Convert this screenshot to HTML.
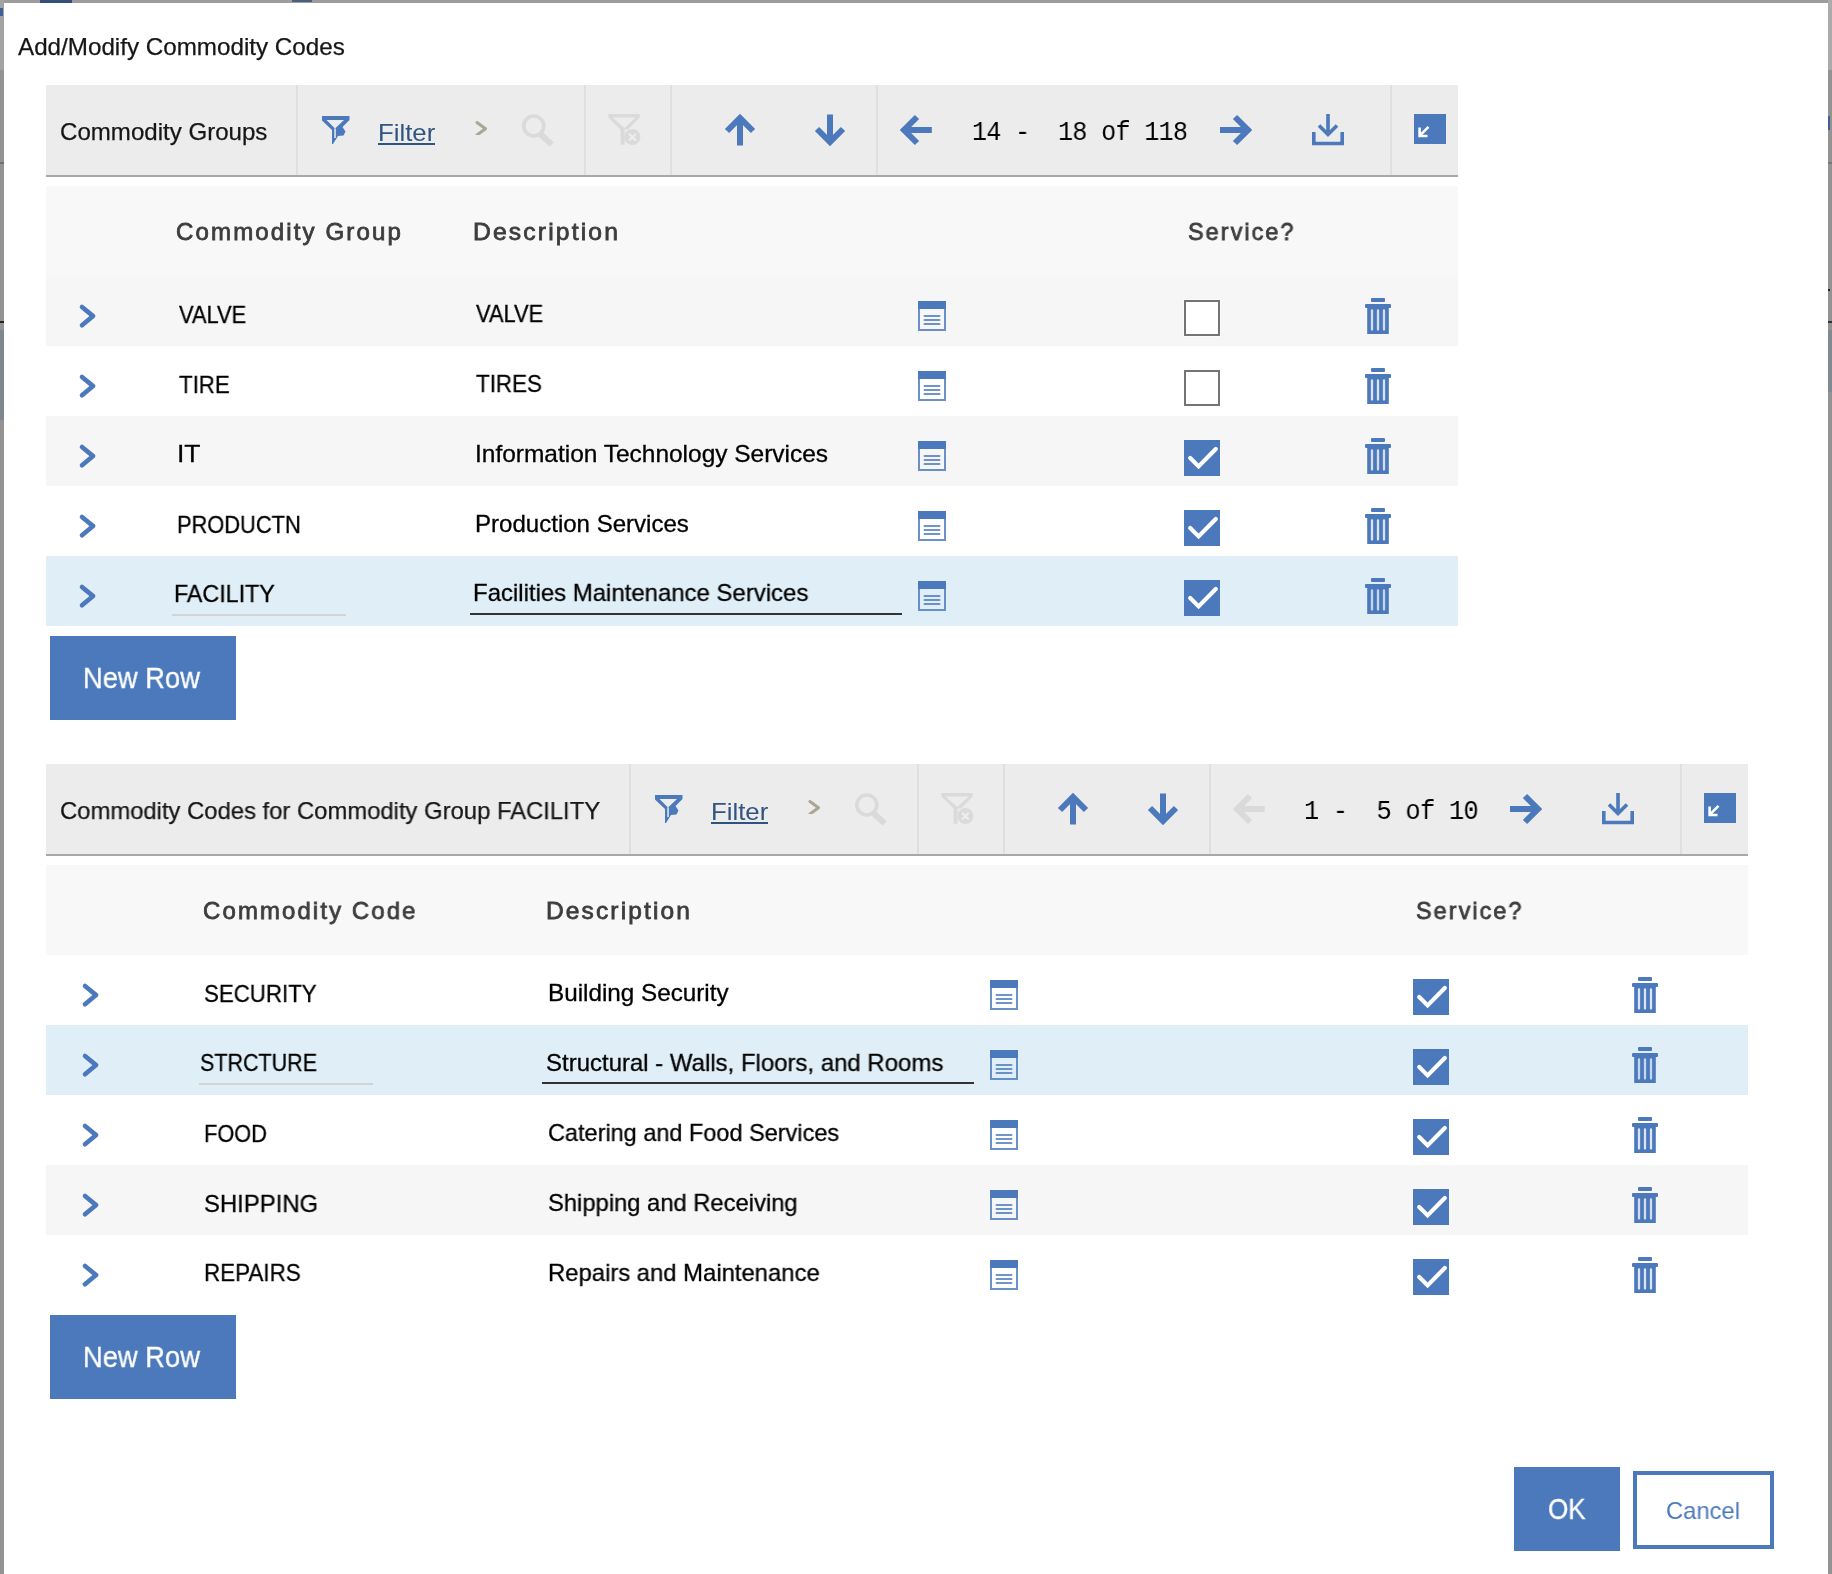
<!DOCTYPE html>
<html><head><meta charset="utf-8"><title>Add/Modify Commodity Codes</title>
<style>
html,body{margin:0;padding:0;}
body{width:1832px;height:1574px;position:relative;overflow:hidden;background:#9c9c9c;font-family:"Liberation Sans", sans-serif;}
svg{display:block;}
div[id]{will-change:transform;}
</style></head><body>
<div style="position:absolute;left:0px;top:0px;width:1832px;height:1574px;background:#939393;"></div>
<div style="position:absolute;left:0px;top:0px;width:1832px;height:3px;background:#9d9d9d;"></div>
<div style="position:absolute;left:0px;top:0px;width:4px;height:70px;background:#a3a3a3;"></div>
<div style="position:absolute;left:1828px;top:0px;width:4px;height:70px;background:#ababab;"></div>
<div style="position:absolute;left:0px;top:330px;width:4px;height:90px;background:#7e8690;"></div>
<div style="position:absolute;left:1828px;top:330px;width:4px;height:62px;background:#808a92;"></div>
<div style="position:absolute;left:0px;top:162px;width:4px;height:2px;background:#707070;"></div>
<div style="position:absolute;left:0px;top:321px;width:4px;height:2px;background:#222222;"></div>
<div style="position:absolute;left:1828px;top:162px;width:4px;height:2px;background:#777777;"></div>
<div style="position:absolute;left:1828px;top:321px;width:4px;height:2px;background:#333333;"></div>
<div style="position:absolute;left:1828px;top:289px;width:2px;height:2px;background:#222222;"></div>
<div style="position:absolute;left:1828px;top:116px;width:2px;height:14px;background:#3f5f95;"></div>
<div style="position:absolute;left:0px;top:8px;width:3px;height:8px;background:#3f6296;"></div>
<div style="position:absolute;left:40px;top:0px;width:32px;height:3px;background:#34507a;"></div>
<div style="position:absolute;left:292px;top:0px;width:20px;height:2px;background:#4a5f80;"></div>
<div style="position:absolute;left:4px;top:3px;width:1824px;height:1571px;background:#ffffff;"></div>
<div id="title" style="position:absolute;left:18.19px;top:35.21px;font-family:'Liberation Sans', sans-serif;font-size:24px;line-height:24px;font-weight:400;color:#161616;white-space:pre;transform-origin:0 0;transform:scaleX(1.0081);-webkit-text-stroke:0.25px #161616;">Add/Modify Commodity Codes</div>
<div style="position:absolute;left:46px;top:85px;width:1412px;height:90px;background:#ececec;"></div>
<div style="position:absolute;left:46px;top:175px;width:1412px;height:2px;background:#a8a8a8;"></div>
<div style="position:absolute;left:296px;top:85px;width:2px;height:90px;background:#dfdfdf;"></div>
<div style="position:absolute;left:584px;top:85px;width:2px;height:90px;background:#dfdfdf;"></div>
<div style="position:absolute;left:670px;top:85px;width:2px;height:90px;background:#dfdfdf;"></div>
<div style="position:absolute;left:876px;top:85px;width:2px;height:90px;background:#dfdfdf;"></div>
<div style="position:absolute;left:1390px;top:85px;width:2px;height:90px;background:#dfdfdf;"></div>
<div id="t1title" style="position:absolute;left:60.00px;top:119.82px;font-family:'Liberation Sans', sans-serif;font-size:24px;line-height:24px;font-weight:400;color:#161616;white-space:pre;transform-origin:0 0;transform:scaleX(1.0030);-webkit-text-stroke:0.25px #161616;">Commodity Groups</div>
<svg style="position:absolute;left:316px;top:110px" width="40" height="40" viewBox="0 0 40 40"><path fill="#4b79bc" fill-rule="evenodd" d="M6,6 H33.5 V10 L26.5,17 L29.5,21.5 L27.5,25.5 L22,26 L17,34 L16,34 V20 L6,10.5 Z M10.5,10 H28 L19,18.5 Z M18.3,18.5 H19.8 V28 H18.3 Z"/></svg>
<div id="t1filter" style="position:absolute;left:378.10px;top:121.32px;font-family:'Liberation Sans', sans-serif;font-size:24px;line-height:24px;font-weight:400;color:#30547f;white-space:pre;transform-origin:0 0;transform:scaleX(1.0744);">Filter</div>
<div style="position:absolute;left:378px;top:142.9px;width:56.5px;height:1.6999999999999886px;background:#30547f;"></div>
<svg style="position:absolute;left:470px;top:115px" width="20" height="20" viewBox="0 0 20 20"><path d="M7,7.5 L15.5,13.7 L7,20" fill="none" stroke="#aaa595" stroke-width="3" stroke-linecap="round" stroke-linejoin="round"/></svg>
<svg style="position:absolute;left:518px;top:107px" width="40" height="40" viewBox="0 0 40 40"><circle cx="15.8" cy="19" r="10" fill="none" stroke="#dadada" stroke-width="3.6"/><path d="M25,29.5 L31.5,35.5" stroke="#dadada" stroke-width="6" stroke-linecap="square"/></svg>
<svg style="position:absolute;left:604px;top:110px" width="40" height="40" viewBox="0 0 40 40"><path fill="#dadada" fill-rule="evenodd" d="M4.3,4 H35.7 V7.6 L24,19.5 L20.4,19.5 L16.6,19.5 L4.3,7.6 Z M8.5,7.6 H31.5 L20.4,18 Z"/><rect x="16.6" y="19" width="4" height="15.7" fill="#dadada"/><circle cx="28.4" cy="27.1" r="8" fill="#dadada"/><path d="M25,23.7 L31.8,30.5 M31.8,23.7 L25,30.5" stroke="#eeeeee" stroke-width="2"/></svg>
<svg style="position:absolute;left:724px;top:114px" width="32" height="32" viewBox="0 0 32 32"><path d="M16,31.6 V4 M3,17 L16,4 L29,17" fill="none" stroke="#4b79bc" stroke-width="6"/></svg>
<svg style="position:absolute;left:814px;top:114px" width="32" height="32" viewBox="0 0 32 32"><path d="M16,0.4 V28 M3,15 L16,28 L29,15" fill="none" stroke="#4b79bc" stroke-width="6"/></svg>
<svg style="position:absolute;left:900.0px;top:114px" width="32" height="32" viewBox="0 0 32 32"><path d="M31.8,16 H4 M17,3 L4,16 L17,29" fill="none" stroke="#4b79bc" stroke-width="6"/></svg>
<div id="t1pg" style="position:absolute;left:971.72px;top:119.81px;font-family:'Liberation Mono', monospace;font-size:27px;line-height:27px;font-weight:400;color:#000;white-space:pre;transform-origin:0 0;transform:scaleX(0.9230);letter-spacing:-0.65px;">14 -  18 of 118</div>
<svg style="position:absolute;left:1220px;top:114px" width="32" height="32" viewBox="0 0 32 32"><path d="M0,16 H28 M15,3 L28,16 L15,29" fill="none" stroke="#4b79bc" stroke-width="6"/></svg>
<svg style="position:absolute;left:1312px;top:114px" width="32" height="32" viewBox="0 0 32 32"><path d="M16,0 V21 M7,11.5 L16,20.5 L25,11.5" fill="none" stroke="#4b79bc" stroke-width="3.6"/><path d="M1.8,18 V29.5 H30.2 V18" fill="none" stroke="#4b79bc" stroke-width="3.6"/></svg>
<svg style="position:absolute;left:1414px;top:114px" width="32" height="30" viewBox="0 0 32 30"><rect x="0" y="0" width="32" height="30" fill="#4b79bc"/><path d="M14.5,12.8 L6.5,20.8 M5.6,13.5 V22 H13.5" fill="none" stroke="#fff" stroke-width="2.6"/></svg>
<div style="position:absolute;left:46px;top:186px;width:1412px;height:90px;background:#f8f8f8;"></div>
<div id="h1a" style="position:absolute;left:176.00px;top:219.51px;font-family:'Liberation Sans', sans-serif;font-size:24px;line-height:24px;font-weight:400;color:#3d3d3d;white-space:pre;transform-origin:0 0;transform:scaleX(1.0030);-webkit-text-stroke:0.8px #3d3d3d;letter-spacing:2.1px;">Commodity Group</div>
<div id="h1b" style="position:absolute;left:472.95px;top:219.51px;font-family:'Liberation Sans', sans-serif;font-size:24px;line-height:24px;font-weight:400;color:#3d3d3d;white-space:pre;transform-origin:0 0;transform:scaleX(1.0274);-webkit-text-stroke:0.8px #3d3d3d;letter-spacing:2.1px;">Description</div>
<div id="h1c" style="position:absolute;left:1187.86px;top:219.51px;font-family:'Liberation Sans', sans-serif;font-size:24px;line-height:24px;font-weight:400;color:#3d3d3d;white-space:pre;transform-origin:0 0;transform:scaleX(0.9752);-webkit-text-stroke:0.8px #3d3d3d;letter-spacing:2.1px;">Service?</div>
<div style="position:absolute;left:46px;top:276px;width:1412px;height:70px;background:#f6f6f6;"></div>
<svg style="position:absolute;left:77.1px;top:301.8px" width="24" height="30" viewBox="0 0 24 30"><path d="M5,5 L16.1,14.1 L5,23.3" fill="none" stroke="#4b79bc" stroke-width="4.6" stroke-linecap="round" stroke-linejoin="round"/></svg>
<div id="t1r0g" style="position:absolute;left:179.33px;top:302.82px;font-family:'Liberation Sans', sans-serif;font-size:24px;line-height:24px;font-weight:400;color:#000;white-space:pre;transform-origin:0 0;transform:scaleX(0.9105);-webkit-text-stroke:0.3px #000;">VALVE</div>
<div id="t1r0d" style="position:absolute;left:475.67px;top:301.51px;font-family:'Liberation Sans', sans-serif;font-size:24px;line-height:24px;font-weight:400;color:#000;white-space:pre;transform-origin:0 0;transform:scaleX(0.9105);-webkit-text-stroke:0.3px #000;">VALVE</div>
<svg style="position:absolute;left:918px;top:301px" width="28" height="30" viewBox="0 0 28 30"><rect x="1" y="1" width="26" height="28" fill="none" stroke="#4b79bc" stroke-opacity="0.82" stroke-width="2"/><rect x="0" y="0" width="28" height="8" fill="#4b79bc"/><path d="M6.5,15 H21.5 M6.5,19 H21.5 M6.5,23 H21.5" stroke="#4b79bc" stroke-opacity="0.8" stroke-width="2" stroke-linecap="round"/></svg>
<svg style="position:absolute;left:1183px;top:299px" width="38" height="38" viewBox="0 0 38 38"><rect x="0.5" y="0.5" width="37" height="37" fill="#fff"/><rect x="2" y="2" width="34" height="34" fill="#fff" stroke="#747474" stroke-width="2"/></svg>
<svg style="position:absolute;left:1365px;top:298px" width="26" height="36" viewBox="0 0 26 36"><rect x="6" y="0" width="14" height="4" rx="1" fill="#4b79bc"/><rect x="0" y="6" width="26" height="4" rx="1" fill="#4b79bc"/><rect x="2.2" y="9" width="21.6" height="27" fill="#4b79bc"/><path d="M7,12.5 V31.5 M13,12.5 V31.5 M19,12.5 V31.5" stroke="#f6f6f6" stroke-opacity="0.8" stroke-width="2.3" stroke-linecap="round"/></svg>
<svg style="position:absolute;left:77.1px;top:371.8px" width="24" height="30" viewBox="0 0 24 30"><path d="M5,5 L16.1,14.1 L5,23.3" fill="none" stroke="#4b79bc" stroke-width="4.6" stroke-linecap="round" stroke-linejoin="round"/></svg>
<div id="t1r1g" style="position:absolute;left:179.31px;top:373.01px;font-family:'Liberation Sans', sans-serif;font-size:24px;line-height:24px;font-weight:400;color:#000;white-space:pre;transform-origin:0 0;transform:scaleX(0.9276);-webkit-text-stroke:0.3px #000;">TIRE</div>
<div id="t1r1d" style="position:absolute;left:475.71px;top:371.82px;font-family:'Liberation Sans', sans-serif;font-size:24px;line-height:24px;font-weight:400;color:#000;white-space:pre;transform-origin:0 0;transform:scaleX(0.9320);-webkit-text-stroke:0.3px #000;">TIRES</div>
<svg style="position:absolute;left:918px;top:371px" width="28" height="30" viewBox="0 0 28 30"><rect x="1" y="1" width="26" height="28" fill="none" stroke="#4b79bc" stroke-opacity="0.82" stroke-width="2"/><rect x="0" y="0" width="28" height="8" fill="#4b79bc"/><path d="M6.5,15 H21.5 M6.5,19 H21.5 M6.5,23 H21.5" stroke="#4b79bc" stroke-opacity="0.8" stroke-width="2" stroke-linecap="round"/></svg>
<svg style="position:absolute;left:1183px;top:369px" width="38" height="38" viewBox="0 0 38 38"><rect x="0.5" y="0.5" width="37" height="37" fill="#fff"/><rect x="2" y="2" width="34" height="34" fill="#fff" stroke="#747474" stroke-width="2"/></svg>
<svg style="position:absolute;left:1365px;top:368px" width="26" height="36" viewBox="0 0 26 36"><rect x="6" y="0" width="14" height="4" rx="1" fill="#4b79bc"/><rect x="0" y="6" width="26" height="4" rx="1" fill="#4b79bc"/><rect x="2.2" y="9" width="21.6" height="27" fill="#4b79bc"/><path d="M7,12.5 V31.5 M13,12.5 V31.5 M19,12.5 V31.5" stroke="#ffffff" stroke-opacity="0.8" stroke-width="2.3" stroke-linecap="round"/></svg>
<div style="position:absolute;left:46px;top:416px;width:1412px;height:70px;background:#f6f6f6;"></div>
<svg style="position:absolute;left:77.1px;top:441.8px" width="24" height="30" viewBox="0 0 24 30"><path d="M5,5 L16.1,14.1 L5,23.3" fill="none" stroke="#4b79bc" stroke-width="4.6" stroke-linecap="round" stroke-linejoin="round"/></svg>
<div id="t1r2g" style="position:absolute;left:177.08px;top:442.32px;font-family:'Liberation Sans', sans-serif;font-size:24px;line-height:24px;font-weight:400;color:#000;white-space:pre;transform-origin:0 0;transform:scaleX(1.1053);-webkit-text-stroke:0.3px #000;">IT</div>
<div id="t1r2d" style="position:absolute;left:475.17px;top:441.82px;font-family:'Liberation Sans', sans-serif;font-size:24px;line-height:24px;font-weight:400;color:#000;white-space:pre;transform-origin:0 0;transform:scaleX(1.0192);-webkit-text-stroke:0.3px #000;">Information Technology Services</div>
<svg style="position:absolute;left:918px;top:441px" width="28" height="30" viewBox="0 0 28 30"><rect x="1" y="1" width="26" height="28" fill="none" stroke="#4b79bc" stroke-opacity="0.82" stroke-width="2"/><rect x="0" y="0" width="28" height="8" fill="#4b79bc"/><path d="M6.5,15 H21.5 M6.5,19 H21.5 M6.5,23 H21.5" stroke="#4b79bc" stroke-opacity="0.8" stroke-width="2" stroke-linecap="round"/></svg>
<svg style="position:absolute;left:1184px;top:440px" width="36" height="36" viewBox="0 0 36 36"><rect x="0" y="0" width="36" height="36" fill="#4b79bc"/><path d="M6.2,18.1 L14.6,26.4 L31.8,9" fill="none" stroke="#fff" stroke-width="4.2" stroke-linecap="round"/></svg>
<svg style="position:absolute;left:1365px;top:438px" width="26" height="36" viewBox="0 0 26 36"><rect x="6" y="0" width="14" height="4" rx="1" fill="#4b79bc"/><rect x="0" y="6" width="26" height="4" rx="1" fill="#4b79bc"/><rect x="2.2" y="9" width="21.6" height="27" fill="#4b79bc"/><path d="M7,12.5 V31.5 M13,12.5 V31.5 M19,12.5 V31.5" stroke="#f6f6f6" stroke-opacity="0.8" stroke-width="2.3" stroke-linecap="round"/></svg>
<svg style="position:absolute;left:77.1px;top:511.79999999999995px" width="24" height="30" viewBox="0 0 24 30"><path d="M5,5 L16.1,14.1 L5,23.3" fill="none" stroke="#4b79bc" stroke-width="4.6" stroke-linecap="round" stroke-linejoin="round"/></svg>
<div id="t1r3g" style="position:absolute;left:177.49px;top:512.51px;font-family:'Liberation Sans', sans-serif;font-size:24px;line-height:24px;font-weight:400;color:#000;white-space:pre;transform-origin:0 0;transform:scaleX(0.9093);-webkit-text-stroke:0.3px #000;">PRODUCTN</div>
<div id="t1r3d" style="position:absolute;left:475.19px;top:512.01px;font-family:'Liberation Sans', sans-serif;font-size:24px;line-height:24px;font-weight:400;color:#000;white-space:pre;transform-origin:0 0;transform:scaleX(1.0020);-webkit-text-stroke:0.3px #000;">Production Services</div>
<svg style="position:absolute;left:918px;top:511px" width="28" height="30" viewBox="0 0 28 30"><rect x="1" y="1" width="26" height="28" fill="none" stroke="#4b79bc" stroke-opacity="0.82" stroke-width="2"/><rect x="0" y="0" width="28" height="8" fill="#4b79bc"/><path d="M6.5,15 H21.5 M6.5,19 H21.5 M6.5,23 H21.5" stroke="#4b79bc" stroke-opacity="0.8" stroke-width="2" stroke-linecap="round"/></svg>
<svg style="position:absolute;left:1184px;top:510px" width="36" height="36" viewBox="0 0 36 36"><rect x="0" y="0" width="36" height="36" fill="#4b79bc"/><path d="M6.2,18.1 L14.6,26.4 L31.8,9" fill="none" stroke="#fff" stroke-width="4.2" stroke-linecap="round"/></svg>
<svg style="position:absolute;left:1365px;top:508px" width="26" height="36" viewBox="0 0 26 36"><rect x="6" y="0" width="14" height="4" rx="1" fill="#4b79bc"/><rect x="0" y="6" width="26" height="4" rx="1" fill="#4b79bc"/><rect x="2.2" y="9" width="21.6" height="27" fill="#4b79bc"/><path d="M7,12.5 V31.5 M13,12.5 V31.5 M19,12.5 V31.5" stroke="#ffffff" stroke-opacity="0.8" stroke-width="2.3" stroke-linecap="round"/></svg>
<div style="position:absolute;left:46px;top:556px;width:1412px;height:70px;background:#e0eff7;"></div>
<svg style="position:absolute;left:77.1px;top:581.8px" width="24" height="30" viewBox="0 0 24 30"><path d="M5,5 L16.1,14.1 L5,23.3" fill="none" stroke="#4b79bc" stroke-width="4.6" stroke-linecap="round" stroke-linejoin="round"/></svg>
<div id="t1r4g" style="position:absolute;left:173.96px;top:581.91px;font-family:'Liberation Sans', sans-serif;font-size:24px;line-height:24px;font-weight:400;color:#000;white-space:pre;transform-origin:0 0;transform:scaleX(0.9688);-webkit-text-stroke:0.3px #000;">FACILITY</div>
<div id="t1r4d" style="position:absolute;left:473.30px;top:581.01px;font-family:'Liberation Sans', sans-serif;font-size:24px;line-height:24px;font-weight:400;color:#000;white-space:pre;transform-origin:0 0;transform:scaleX(0.9976);-webkit-text-stroke:0.3px #000;">Facilities Maintenance Services</div>
<svg style="position:absolute;left:918px;top:581px" width="28" height="30" viewBox="0 0 28 30"><rect x="1" y="1" width="26" height="28" fill="none" stroke="#4b79bc" stroke-opacity="0.82" stroke-width="2"/><rect x="0" y="0" width="28" height="8" fill="#4b79bc"/><path d="M6.5,15 H21.5 M6.5,19 H21.5 M6.5,23 H21.5" stroke="#4b79bc" stroke-opacity="0.8" stroke-width="2" stroke-linecap="round"/></svg>
<svg style="position:absolute;left:1184px;top:580px" width="36" height="36" viewBox="0 0 36 36"><rect x="0" y="0" width="36" height="36" fill="#4b79bc"/><path d="M6.2,18.1 L14.6,26.4 L31.8,9" fill="none" stroke="#fff" stroke-width="4.2" stroke-linecap="round"/></svg>
<svg style="position:absolute;left:1365px;top:578px" width="26" height="36" viewBox="0 0 26 36"><rect x="6" y="0" width="14" height="4" rx="1" fill="#4b79bc"/><rect x="0" y="6" width="26" height="4" rx="1" fill="#4b79bc"/><rect x="2.2" y="9" width="21.6" height="27" fill="#4b79bc"/><path d="M7,12.5 V31.5 M13,12.5 V31.5 M19,12.5 V31.5" stroke="#e0eff7" stroke-opacity="0.8" stroke-width="2.3" stroke-linecap="round"/></svg>
<div style="position:absolute;left:172px;top:613.5px;width:174px;height:2.0px;background:#d3d3d3;"></div>
<div style="position:absolute;left:470px;top:613px;width:432px;height:2px;background:#333333;"></div>
<div style="position:absolute;left:50px;top:636px;width:186px;height:84px;background:#4b79bc;"></div>
<div id="nr1" style="position:absolute;left:83.32px;top:664.10px;font-family:'Liberation Sans', sans-serif;font-size:29px;line-height:29px;font-weight:400;color:#fff;white-space:pre;transform-origin:0 0;transform:scaleX(0.9418);-webkit-text-stroke:0.3px #fff;">New Row</div>
<div style="position:absolute;left:46px;top:764px;width:1702px;height:90px;background:#ececec;"></div>
<div style="position:absolute;left:46px;top:854px;width:1702px;height:2px;background:#a8a8a8;"></div>
<div style="position:absolute;left:629px;top:764px;width:2px;height:90px;background:#dfdfdf;"></div>
<div style="position:absolute;left:917px;top:764px;width:2px;height:90px;background:#dfdfdf;"></div>
<div style="position:absolute;left:1003px;top:764px;width:2px;height:90px;background:#dfdfdf;"></div>
<div style="position:absolute;left:1209px;top:764px;width:2px;height:90px;background:#dfdfdf;"></div>
<div style="position:absolute;left:1680px;top:764px;width:2px;height:90px;background:#dfdfdf;"></div>
<div id="t2title" style="position:absolute;left:60.00px;top:798.82px;font-family:'Liberation Sans', sans-serif;font-size:24px;line-height:24px;font-weight:400;color:#161616;white-space:pre;transform-origin:0 0;transform:scaleX(0.9926);-webkit-text-stroke:0.25px #161616;">Commodity Codes for Commodity Group FACILITY</div>
<svg style="position:absolute;left:649px;top:789px" width="40" height="40" viewBox="0 0 40 40"><path fill="#4b79bc" fill-rule="evenodd" d="M6,6 H33.5 V10 L26.5,17 L29.5,21.5 L27.5,25.5 L22,26 L17,34 L16,34 V20 L6,10.5 Z M10.5,10 H28 L19,18.5 Z M18.3,18.5 H19.8 V28 H18.3 Z"/></svg>
<div id="t2filter" style="position:absolute;left:711.10px;top:800.32px;font-family:'Liberation Sans', sans-serif;font-size:24px;line-height:24px;font-weight:400;color:#30547f;white-space:pre;transform-origin:0 0;transform:scaleX(1.0744);">Filter</div>
<div style="position:absolute;left:711px;top:821.9px;width:56.5px;height:1.7000000000000455px;background:#30547f;"></div>
<svg style="position:absolute;left:803px;top:794px" width="20" height="20" viewBox="0 0 20 20"><path d="M7,7.5 L15.5,13.7 L7,20" fill="none" stroke="#aaa595" stroke-width="3" stroke-linecap="round" stroke-linejoin="round"/></svg>
<svg style="position:absolute;left:851px;top:786px" width="40" height="40" viewBox="0 0 40 40"><circle cx="15.8" cy="19" r="10" fill="none" stroke="#dadada" stroke-width="3.6"/><path d="M25,29.5 L31.5,35.5" stroke="#dadada" stroke-width="6" stroke-linecap="square"/></svg>
<svg style="position:absolute;left:937px;top:789px" width="40" height="40" viewBox="0 0 40 40"><path fill="#dadada" fill-rule="evenodd" d="M4.3,4 H35.7 V7.6 L24,19.5 L20.4,19.5 L16.6,19.5 L4.3,7.6 Z M8.5,7.6 H31.5 L20.4,18 Z"/><rect x="16.6" y="19" width="4" height="15.7" fill="#dadada"/><circle cx="28.4" cy="27.1" r="8" fill="#dadada"/><path d="M25,23.7 L31.8,30.5 M31.8,23.7 L25,30.5" stroke="#eeeeee" stroke-width="2"/></svg>
<svg style="position:absolute;left:1057px;top:793px" width="32" height="32" viewBox="0 0 32 32"><path d="M16,31.6 V4 M3,17 L16,4 L29,17" fill="none" stroke="#4b79bc" stroke-width="6"/></svg>
<svg style="position:absolute;left:1147px;top:793px" width="32" height="32" viewBox="0 0 32 32"><path d="M16,0.4 V28 M3,15 L16,28 L29,15" fill="none" stroke="#4b79bc" stroke-width="6"/></svg>
<svg style="position:absolute;left:1232.6000000000001px;top:793px" width="32" height="32" viewBox="0 0 32 32"><path d="M31.8,16 H4 M17,3 L4,16 L17,29" fill="none" stroke="#dadada" stroke-width="6"/></svg>
<div id="t2pg" style="position:absolute;left:1303.92px;top:798.81px;font-family:'Liberation Mono', monospace;font-size:27px;line-height:27px;font-weight:400;color:#000;white-space:pre;transform-origin:0 0;transform:scaleX(0.9327);letter-spacing:-0.65px;">1 -  5 of 10</div>
<svg style="position:absolute;left:1510px;top:793px" width="32" height="32" viewBox="0 0 32 32"><path d="M0,16 H28 M15,3 L28,16 L15,29" fill="none" stroke="#4b79bc" stroke-width="6"/></svg>
<svg style="position:absolute;left:1602px;top:793px" width="32" height="32" viewBox="0 0 32 32"><path d="M16,0 V21 M7,11.5 L16,20.5 L25,11.5" fill="none" stroke="#4b79bc" stroke-width="3.6"/><path d="M1.8,18 V29.5 H30.2 V18" fill="none" stroke="#4b79bc" stroke-width="3.6"/></svg>
<svg style="position:absolute;left:1704px;top:793px" width="32" height="30" viewBox="0 0 32 30"><rect x="0" y="0" width="32" height="30" fill="#4b79bc"/><path d="M14.5,12.8 L6.5,20.8 M5.6,13.5 V22 H13.5" fill="none" stroke="#fff" stroke-width="2.6"/></svg>
<div style="position:absolute;left:46px;top:865px;width:1702px;height:90px;background:#f8f8f8;"></div>
<div id="h2a" style="position:absolute;left:202.50px;top:898.60px;font-family:'Liberation Sans', sans-serif;font-size:24px;line-height:24px;font-weight:400;color:#3d3d3d;white-space:pre;transform-origin:0 0;transform:scaleX(0.9988);-webkit-text-stroke:0.8px #3d3d3d;letter-spacing:2.1px;">Commodity Code</div>
<div id="h2b" style="position:absolute;left:546.44px;top:898.60px;font-family:'Liberation Sans', sans-serif;font-size:24px;line-height:24px;font-weight:400;color:#3d3d3d;white-space:pre;transform-origin:0 0;transform:scaleX(1.0202);-webkit-text-stroke:0.8px #3d3d3d;letter-spacing:2.1px;">Description</div>
<div id="h2c" style="position:absolute;left:1416.02px;top:898.60px;font-family:'Liberation Sans', sans-serif;font-size:24px;line-height:24px;font-weight:400;color:#3d3d3d;white-space:pre;transform-origin:0 0;transform:scaleX(0.9752);-webkit-text-stroke:0.8px #3d3d3d;letter-spacing:2.1px;">Service?</div>
<svg style="position:absolute;left:80.2px;top:981px" width="24" height="30" viewBox="0 0 24 30"><path d="M5,5 L16.1,14.1 L5,23.3" fill="none" stroke="#4b79bc" stroke-width="4.6" stroke-linecap="round" stroke-linejoin="round"/></svg>
<div id="t2r0g" style="position:absolute;left:203.98px;top:981.51px;font-family:'Liberation Sans', sans-serif;font-size:24px;line-height:24px;font-weight:400;color:#000;white-space:pre;transform-origin:0 0;transform:scaleX(0.9281);-webkit-text-stroke:0.3px #000;">SECURITY</div>
<div id="t2r0d" style="position:absolute;left:547.68px;top:981.01px;font-family:'Liberation Sans', sans-serif;font-size:24px;line-height:24px;font-weight:400;color:#000;white-space:pre;transform-origin:0 0;transform:scaleX(1.0103);-webkit-text-stroke:0.3px #000;">Building Security</div>
<svg style="position:absolute;left:990px;top:980px" width="28" height="30" viewBox="0 0 28 30"><rect x="1" y="1" width="26" height="28" fill="none" stroke="#4b79bc" stroke-opacity="0.82" stroke-width="2"/><rect x="0" y="0" width="28" height="8" fill="#4b79bc"/><path d="M6.5,15 H21.5 M6.5,19 H21.5 M6.5,23 H21.5" stroke="#4b79bc" stroke-opacity="0.8" stroke-width="2" stroke-linecap="round"/></svg>
<svg style="position:absolute;left:1413px;top:979px" width="36" height="36" viewBox="0 0 36 36"><rect x="0" y="0" width="36" height="36" fill="#4b79bc"/><path d="M6.2,18.1 L14.6,26.4 L31.8,9" fill="none" stroke="#fff" stroke-width="4.2" stroke-linecap="round"/></svg>
<svg style="position:absolute;left:1632px;top:977px" width="26" height="36" viewBox="0 0 26 36"><rect x="6" y="0" width="14" height="4" rx="1" fill="#4b79bc"/><rect x="0" y="6" width="26" height="4" rx="1" fill="#4b79bc"/><rect x="2.2" y="9" width="21.6" height="27" fill="#4b79bc"/><path d="M7,12.5 V31.5 M13,12.5 V31.5 M19,12.5 V31.5" stroke="#ffffff" stroke-opacity="0.8" stroke-width="2.3" stroke-linecap="round"/></svg>
<div style="position:absolute;left:46px;top:1025px;width:1702px;height:70px;background:#e0eff7;"></div>
<svg style="position:absolute;left:80.2px;top:1051px" width="24" height="30" viewBox="0 0 24 30"><path d="M5,5 L16.1,14.1 L5,23.3" fill="none" stroke="#4b79bc" stroke-width="4.6" stroke-linecap="round" stroke-linejoin="round"/></svg>
<div id="t2r1g" style="position:absolute;left:199.66px;top:1050.91px;font-family:'Liberation Sans', sans-serif;font-size:24px;line-height:24px;font-weight:400;color:#000;white-space:pre;transform-origin:0 0;transform:scaleX(0.8956);-webkit-text-stroke:0.3px #000;">STRCTURE</div>
<div id="t2r1d" style="position:absolute;left:546.00px;top:1050.51px;font-family:'Liberation Sans', sans-serif;font-size:24px;line-height:24px;font-weight:400;color:#000;white-space:pre;transform-origin:0 0;transform:scaleX(0.9985);-webkit-text-stroke:0.3px #000;">Structural - Walls, Floors, and Rooms</div>
<svg style="position:absolute;left:990px;top:1050px" width="28" height="30" viewBox="0 0 28 30"><rect x="1" y="1" width="26" height="28" fill="none" stroke="#4b79bc" stroke-opacity="0.82" stroke-width="2"/><rect x="0" y="0" width="28" height="8" fill="#4b79bc"/><path d="M6.5,15 H21.5 M6.5,19 H21.5 M6.5,23 H21.5" stroke="#4b79bc" stroke-opacity="0.8" stroke-width="2" stroke-linecap="round"/></svg>
<svg style="position:absolute;left:1413px;top:1049px" width="36" height="36" viewBox="0 0 36 36"><rect x="0" y="0" width="36" height="36" fill="#4b79bc"/><path d="M6.2,18.1 L14.6,26.4 L31.8,9" fill="none" stroke="#fff" stroke-width="4.2" stroke-linecap="round"/></svg>
<svg style="position:absolute;left:1632px;top:1047px" width="26" height="36" viewBox="0 0 26 36"><rect x="6" y="0" width="14" height="4" rx="1" fill="#4b79bc"/><rect x="0" y="6" width="26" height="4" rx="1" fill="#4b79bc"/><rect x="2.2" y="9" width="21.6" height="27" fill="#4b79bc"/><path d="M7,12.5 V31.5 M13,12.5 V31.5 M19,12.5 V31.5" stroke="#e0eff7" stroke-opacity="0.8" stroke-width="2.3" stroke-linecap="round"/></svg>
<svg style="position:absolute;left:80.2px;top:1121px" width="24" height="30" viewBox="0 0 24 30"><path d="M5,5 L16.1,14.1 L5,23.3" fill="none" stroke="#4b79bc" stroke-width="4.6" stroke-linecap="round" stroke-linejoin="round"/></svg>
<div id="t2r2g" style="position:absolute;left:204.12px;top:1121.51px;font-family:'Liberation Sans', sans-serif;font-size:24px;line-height:24px;font-weight:400;color:#000;white-space:pre;transform-origin:0 0;transform:scaleX(0.9070);-webkit-text-stroke:0.3px #000;">FOOD</div>
<div id="t2r2d" style="position:absolute;left:548.22px;top:1121.01px;font-family:'Liberation Sans', sans-serif;font-size:24px;line-height:24px;font-weight:400;color:#000;white-space:pre;transform-origin:0 0;transform:scaleX(0.9784);-webkit-text-stroke:0.3px #000;">Catering and Food Services</div>
<svg style="position:absolute;left:990px;top:1120px" width="28" height="30" viewBox="0 0 28 30"><rect x="1" y="1" width="26" height="28" fill="none" stroke="#4b79bc" stroke-opacity="0.82" stroke-width="2"/><rect x="0" y="0" width="28" height="8" fill="#4b79bc"/><path d="M6.5,15 H21.5 M6.5,19 H21.5 M6.5,23 H21.5" stroke="#4b79bc" stroke-opacity="0.8" stroke-width="2" stroke-linecap="round"/></svg>
<svg style="position:absolute;left:1413px;top:1119px" width="36" height="36" viewBox="0 0 36 36"><rect x="0" y="0" width="36" height="36" fill="#4b79bc"/><path d="M6.2,18.1 L14.6,26.4 L31.8,9" fill="none" stroke="#fff" stroke-width="4.2" stroke-linecap="round"/></svg>
<svg style="position:absolute;left:1632px;top:1117px" width="26" height="36" viewBox="0 0 26 36"><rect x="6" y="0" width="14" height="4" rx="1" fill="#4b79bc"/><rect x="0" y="6" width="26" height="4" rx="1" fill="#4b79bc"/><rect x="2.2" y="9" width="21.6" height="27" fill="#4b79bc"/><path d="M7,12.5 V31.5 M13,12.5 V31.5 M19,12.5 V31.5" stroke="#ffffff" stroke-opacity="0.8" stroke-width="2.3" stroke-linecap="round"/></svg>
<div style="position:absolute;left:46px;top:1165px;width:1702px;height:70px;background:#f6f6f6;"></div>
<svg style="position:absolute;left:80.2px;top:1191px" width="24" height="30" viewBox="0 0 24 30"><path d="M5,5 L16.1,14.1 L5,23.3" fill="none" stroke="#4b79bc" stroke-width="4.6" stroke-linecap="round" stroke-linejoin="round"/></svg>
<div id="t2r3g" style="position:absolute;left:203.91px;top:1191.71px;font-family:'Liberation Sans', sans-serif;font-size:24px;line-height:24px;font-weight:400;color:#000;white-space:pre;transform-origin:0 0;transform:scaleX(0.9950);-webkit-text-stroke:0.3px #000;">SHIPPING</div>
<div id="t2r3d" style="position:absolute;left:548.21px;top:1191.21px;font-family:'Liberation Sans', sans-serif;font-size:24px;line-height:24px;font-weight:400;color:#000;white-space:pre;transform-origin:0 0;transform:scaleX(0.9897);-webkit-text-stroke:0.3px #000;">Shipping and Receiving</div>
<svg style="position:absolute;left:990px;top:1190px" width="28" height="30" viewBox="0 0 28 30"><rect x="1" y="1" width="26" height="28" fill="none" stroke="#4b79bc" stroke-opacity="0.82" stroke-width="2"/><rect x="0" y="0" width="28" height="8" fill="#4b79bc"/><path d="M6.5,15 H21.5 M6.5,19 H21.5 M6.5,23 H21.5" stroke="#4b79bc" stroke-opacity="0.8" stroke-width="2" stroke-linecap="round"/></svg>
<svg style="position:absolute;left:1413px;top:1189px" width="36" height="36" viewBox="0 0 36 36"><rect x="0" y="0" width="36" height="36" fill="#4b79bc"/><path d="M6.2,18.1 L14.6,26.4 L31.8,9" fill="none" stroke="#fff" stroke-width="4.2" stroke-linecap="round"/></svg>
<svg style="position:absolute;left:1632px;top:1187px" width="26" height="36" viewBox="0 0 26 36"><rect x="6" y="0" width="14" height="4" rx="1" fill="#4b79bc"/><rect x="0" y="6" width="26" height="4" rx="1" fill="#4b79bc"/><rect x="2.2" y="9" width="21.6" height="27" fill="#4b79bc"/><path d="M7,12.5 V31.5 M13,12.5 V31.5 M19,12.5 V31.5" stroke="#f6f6f6" stroke-opacity="0.8" stroke-width="2.3" stroke-linecap="round"/></svg>
<svg style="position:absolute;left:80.2px;top:1261px" width="24" height="30" viewBox="0 0 24 30"><path d="M5,5 L16.1,14.1 L5,23.3" fill="none" stroke="#4b79bc" stroke-width="4.6" stroke-linecap="round" stroke-linejoin="round"/></svg>
<div id="t2r4g" style="position:absolute;left:204.04px;top:1261.01px;font-family:'Liberation Sans', sans-serif;font-size:24px;line-height:24px;font-weight:400;color:#000;white-space:pre;transform-origin:0 0;transform:scaleX(0.9344);-webkit-text-stroke:0.3px #000;">REPAIRS</div>
<div id="t2r4d" style="position:absolute;left:547.71px;top:1260.51px;font-family:'Liberation Sans', sans-serif;font-size:24px;line-height:24px;font-weight:400;color:#000;white-space:pre;transform-origin:0 0;transform:scaleX(0.9934);-webkit-text-stroke:0.3px #000;">Repairs and Maintenance</div>
<svg style="position:absolute;left:990px;top:1260px" width="28" height="30" viewBox="0 0 28 30"><rect x="1" y="1" width="26" height="28" fill="none" stroke="#4b79bc" stroke-opacity="0.82" stroke-width="2"/><rect x="0" y="0" width="28" height="8" fill="#4b79bc"/><path d="M6.5,15 H21.5 M6.5,19 H21.5 M6.5,23 H21.5" stroke="#4b79bc" stroke-opacity="0.8" stroke-width="2" stroke-linecap="round"/></svg>
<svg style="position:absolute;left:1413px;top:1259px" width="36" height="36" viewBox="0 0 36 36"><rect x="0" y="0" width="36" height="36" fill="#4b79bc"/><path d="M6.2,18.1 L14.6,26.4 L31.8,9" fill="none" stroke="#fff" stroke-width="4.2" stroke-linecap="round"/></svg>
<svg style="position:absolute;left:1632px;top:1257px" width="26" height="36" viewBox="0 0 26 36"><rect x="6" y="0" width="14" height="4" rx="1" fill="#4b79bc"/><rect x="0" y="6" width="26" height="4" rx="1" fill="#4b79bc"/><rect x="2.2" y="9" width="21.6" height="27" fill="#4b79bc"/><path d="M7,12.5 V31.5 M13,12.5 V31.5 M19,12.5 V31.5" stroke="#ffffff" stroke-opacity="0.8" stroke-width="2.3" stroke-linecap="round"/></svg>
<div style="position:absolute;left:199px;top:1082.5px;width:174px;height:2.0px;background:#d3d3d3;"></div>
<div style="position:absolute;left:542px;top:1081.5px;width:432px;height:2.0px;background:#333333;"></div>
<div style="position:absolute;left:50px;top:1315px;width:186px;height:84px;background:#4b79bc;"></div>
<div id="nr2" style="position:absolute;left:83.32px;top:1343.10px;font-family:'Liberation Sans', sans-serif;font-size:29px;line-height:29px;font-weight:400;color:#fff;white-space:pre;transform-origin:0 0;transform:scaleX(0.9418);-webkit-text-stroke:0.3px #fff;">New Row</div>
<div style="position:absolute;left:1514px;top:1467px;width:106px;height:84px;background:#4b79bc;"></div>
<div id="ok" style="position:absolute;left:1548.10px;top:1494.82px;font-family:'Liberation Sans', sans-serif;font-size:29px;line-height:29px;font-weight:400;color:#fff;white-space:pre;transform-origin:0 0;transform:scaleX(0.8981);-webkit-text-stroke:0.3px #fff;">OK</div>
<div style="position:absolute;left:1633px;top:1471px;width:133px;height:70px;border:4px solid #4b79bc;background:#fff"></div>
<div id="cancel" style="position:absolute;left:1666.15px;top:1498.82px;font-family:'Liberation Sans', sans-serif;font-size:24px;line-height:24px;font-weight:400;color:#4b79bc;white-space:pre;transform-origin:0 0;transform:scaleX(0.9898);">Cancel</div>
</body></html>
